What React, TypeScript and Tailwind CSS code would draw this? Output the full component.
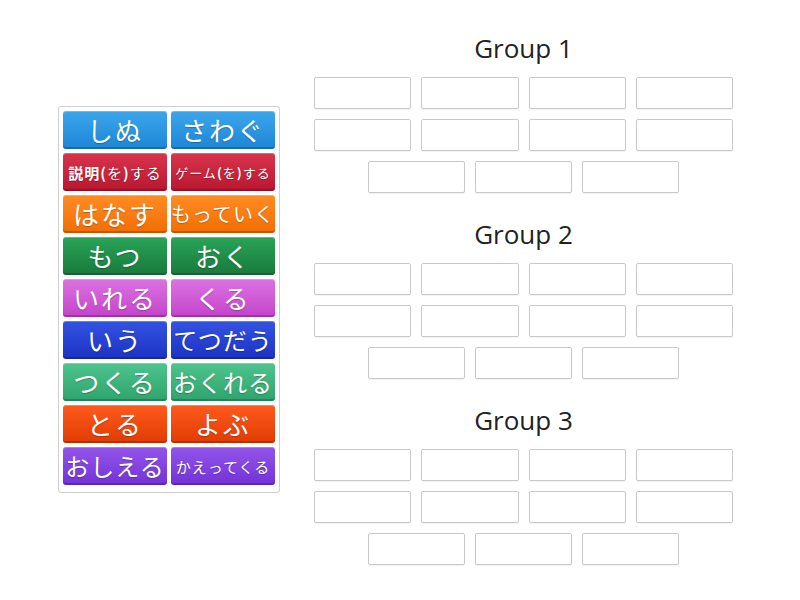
import React from "react";

type Tile = { text: React.ReactNode; size: string; bg: string };

const jp = { fontFamily: '"Noto Sans CJK JP", "Noto Sans", sans-serif' };

const rows: [Tile, Tile][] = [
  [
    { text: "しぬ", size: "text-[26px] tracking-[2px]", bg: "bg-gradient-to-b from-[#3ba6ec] to-[#1d86d6]" },
    { text: "さわぐ", size: "text-[26px] tracking-[2px]", bg: "bg-gradient-to-b from-[#3ba6ec] to-[#1d86d6]" },
  ],
  [
    {
      text: (
        <>
          <span className="font-bold">説明(</span>を<span className="font-bold">)</span>する
        </>
      ),
      size: "text-[15px] tracking-[1px]",
      bg: "bg-gradient-to-b from-[#d9344d] to-[#b8162f]",
    },
    {
      text: (
        <>
          ゲーム<span className="font-bold">(</span>を<span className="font-bold">)</span>する
        </>
      ),
      size: "text-[13px] tracking-[1px]",
      bg: "bg-gradient-to-b from-[#d9344d] to-[#b8162f]",
    },
  ],
  [
    { text: "はなす", size: "text-[26px] tracking-[2px]", bg: "bg-gradient-to-b from-[#ff8c22] to-[#f26d00]" },
    { text: "もっていく", size: "text-[20px] tracking-[1px]", bg: "bg-gradient-to-b from-[#ff8c22] to-[#f26d00]" },
  ],
  [
    { text: "もつ", size: "text-[26px] tracking-[2px]", bg: "bg-gradient-to-b from-[#2aa458] to-[#187a3c]" },
    { text: "おく", size: "text-[26px] tracking-[2px]", bg: "bg-gradient-to-b from-[#2aa458] to-[#187a3c]" },
  ],
  [
    { text: "いれる", size: "text-[26px] tracking-[2px]", bg: "bg-gradient-to-b from-[#dc72e2] to-[#c342cb]" },
    { text: "くる", size: "text-[26px] tracking-[2px]", bg: "bg-gradient-to-b from-[#dc72e2] to-[#c342cb]" },
  ],
  [
    { text: "いう", size: "text-[26px] tracking-[2px]", bg: "bg-gradient-to-b from-[#3452e2] to-[#1c32c2]" },
    { text: "てつだう", size: "text-[24px] tracking-[1px]", bg: "bg-gradient-to-b from-[#3452e2] to-[#1c32c2]" },
  ],
  [
    { text: "つくる", size: "text-[26px] tracking-[2px]", bg: "bg-gradient-to-b from-[#4ec48e] to-[#2ea46c]" },
    { text: "おくれる", size: "text-[24px] tracking-[1px]", bg: "bg-gradient-to-b from-[#4ec48e] to-[#2ea46c]" },
  ],
  [
    { text: "とる", size: "text-[26px] tracking-[2px]", bg: "bg-gradient-to-b from-[#ff5a1c] to-[#e03c02]" },
    { text: "よぶ", size: "text-[26px] tracking-[2px]", bg: "bg-gradient-to-b from-[#ff5a1c] to-[#e03c02]" },
  ],
  [
    { text: "おしえる", size: "text-[24px] tracking-[1px]", bg: "bg-gradient-to-b from-[#9454ea] to-[#7232d8]" },
    { text: "かえってくる", size: "text-[15px] tracking-[1px]", bg: "bg-gradient-to-b from-[#9454ea] to-[#7232d8]" },
  ],
];

function TileBox({ t }: { t: Tile }) {
  return (
    <div
      className={`h-[38px] w-[104px] rounded-[3px] flex items-center justify-center text-white whitespace-nowrap leading-none shadow-[inset_0_-2px_0_rgba(0,0,0,0.2),inset_0_1px_0_rgba(255,255,255,0.25)] [text-shadow:0_1px_1px_rgba(0,0,0,0.25)] ${t.size} ${t.bg}`}
      style={jp}
    >
      {t.text}
    </div>
  );
}

function Slot() {
  return <div className="h-[32px] border border-[#c9c9c9] rounded-[2px] bg-white shadow-[0_1px_1px_rgba(0,0,0,0.06)]" />;
}

function Group({ n }: { n: number }) {
  return (
    <div className="flex flex-col">
      <div
        className="h-[30px] flex items-center justify-center text-[26px] text-[#222] leading-none"
        style={{ fontFamily: '"Open Sans", sans-serif' }}
      >
        Group {n}
      </div>
      <div className="mt-[14px] grid grid-cols-4 gap-x-[10px] gap-y-[10px]">
        {Array.from({ length: 8 }).map((_, i) => (
          <Slot key={i} />
        ))}
      </div>
      <div className="mt-[10px] flex justify-center gap-[10px]">
        {Array.from({ length: 3 }).map((_, i) => (
          <div key={i} className="w-[97.25px]">
            <Slot />
          </div>
        ))}
      </div>
    </div>
  );
}

export default function App() {
  return (
    <div className="w-[800px] h-[600px] bg-white flex items-start">
      <div className="ml-[58px] mt-[106px] w-[222px] border border-[#cfcfcf] rounded-[3px] p-[4px] pb-[7px] flex flex-col gap-[4px] bg-white">
        {rows.map((r, i) => (
          <div key={i} className="flex gap-[4px]">
            <TileBox t={r[0]} />
            <TileBox t={r[1]} />
          </div>
        ))}
      </div>
      <div className="ml-[34px] mt-[33px] w-[419px] flex flex-col gap-[26px]">
        <Group n={1} />
        <Group n={2} />
        <Group n={3} />
      </div>
    </div>
  );
}
